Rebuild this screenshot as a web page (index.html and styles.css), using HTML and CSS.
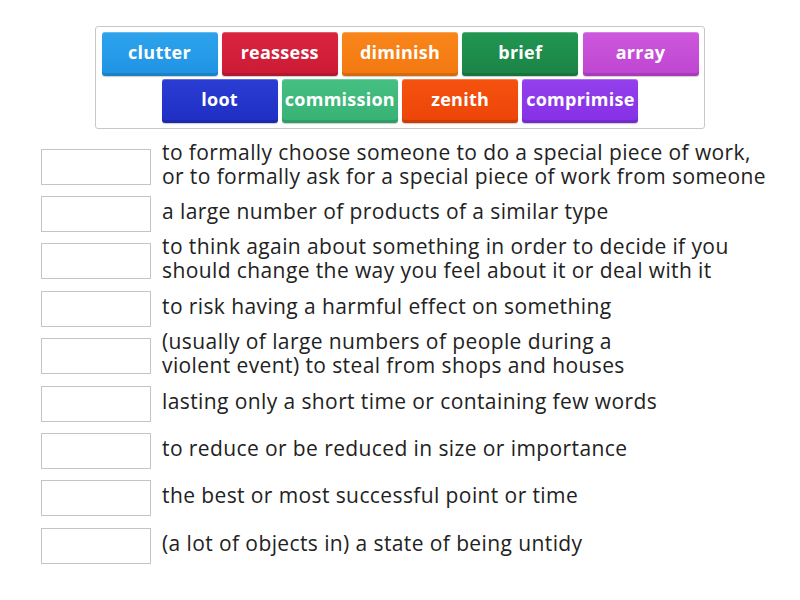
FILE: index.html
```html
<!DOCTYPE html>
<html lang="en">
<head>
<meta charset="utf-8">
<link rel="stylesheet" href="styles.css">
</head>
<body>
<div class="bank">
  <div class="tile c-blue">clutter</div>
  <div class="tile c-red">reassess</div>
  <div class="tile c-orange">diminish</div>
  <div class="tile c-green">brief</div>
  <div class="tile c-pink">array</div>
  <div class="tile c-navy">loot</div>
  <div class="tile c-mint">commission</div>
  <div class="tile c-flame">zenith</div>
  <div class="tile c-violet">comprimise</div>
</div>
<div class="list">
  <div class="row"><div class="slot"></div><div class="def">to formally choose someone to do a special piece of work,<br>or to formally ask for a special piece of work from someone</div></div>
  <div class="row"><div class="slot"></div><div class="def">a large number of products of a similar type</div></div>
  <div class="row"><div class="slot"></div><div class="def">to think again about something in order to decide if you<br>should change the way you feel about it or deal with it</div></div>
  <div class="row"><div class="slot"></div><div class="def">to risk having a harmful effect on something</div></div>
  <div class="row"><div class="slot"></div><div class="def">(usually of large numbers of people during a<br>violent event) to steal from shops and houses</div></div>
  <div class="row"><div class="slot"></div><div class="def">lasting only a short time or containing few words</div></div>
  <div class="row"><div class="slot"></div><div class="def">to reduce or be reduced in size or importance</div></div>
  <div class="row"><div class="slot"></div><div class="def">the best or most successful point or time</div></div>
  <div class="row"><div class="slot"></div><div class="def">(a lot of objects in) a state of being untidy</div></div>
</div>
</body>
</html>
```
FILE: styles.css
```css
html, body {
  margin: 0;
  padding: 0;
  background: #ffffff;
  font-family: "Open Sans", "Noto Sans", sans-serif;
}

.bank {
  width: 598px;
  margin: 26px auto 0;
  padding: 5px;
  border: 1px solid #c8c8c8;
  border-radius: 3px;
  display: flex;
  flex-wrap: wrap;
  justify-content: center;
  gap: 3px 4.25px;
}

.tile {
  width: 116px;
  height: 44px;
  box-sizing: border-box;
  border-radius: 3px;
  color: #ffffff;
  font-weight: 700;
  font-size: 18px;
  letter-spacing: 0.25px;
  display: flex;
  align-items: center;
  justify-content: center;
  padding-bottom: 5px;
  white-space: nowrap;
  box-shadow: inset 0 1px 0 rgba(255,255,255,0.25), inset 0 -3px 0 rgba(0,0,0,0.12), 0 1px 1px rgba(0,0,0,0.2);
}

.c-blue { background: linear-gradient(#2ea3ec, #1f93e3); }
.c-red { background: linear-gradient(#d9243f, #cc1b36); }
.c-orange { background: linear-gradient(#f9861a, #f37811); }
.c-green { background: linear-gradient(#219552, #1b8446); }
.c-pink { background: linear-gradient(#cc58dc, #bf45d1); }
.c-navy { background: linear-gradient(#2a3dd3, #1f2ec3); }
.c-mint { background: linear-gradient(#45bf82, #37b174); }
.c-flame { background: linear-gradient(#f5520f, #ec4408); }
.c-violet { background: linear-gradient(#9440ed, #8530e5); }

.list {
  margin-top: 14px;
  padding-left: 41px;
}

.row {
  height: 47.375px;
  display: flex;
  align-items: center;
}

.slot {
  flex: none;
  width: 110px;
  height: 36px;
  box-sizing: border-box;
  border: 1px solid #c4c4c4;
  background: #ffffff;
}

.def {
  margin-left: 11px;
  font-size: 21px;
  letter-spacing: 0.4px;
  line-height: 24px;
  color: #222222;
  padding-bottom: 6px;
  white-space: nowrap;
}
```
